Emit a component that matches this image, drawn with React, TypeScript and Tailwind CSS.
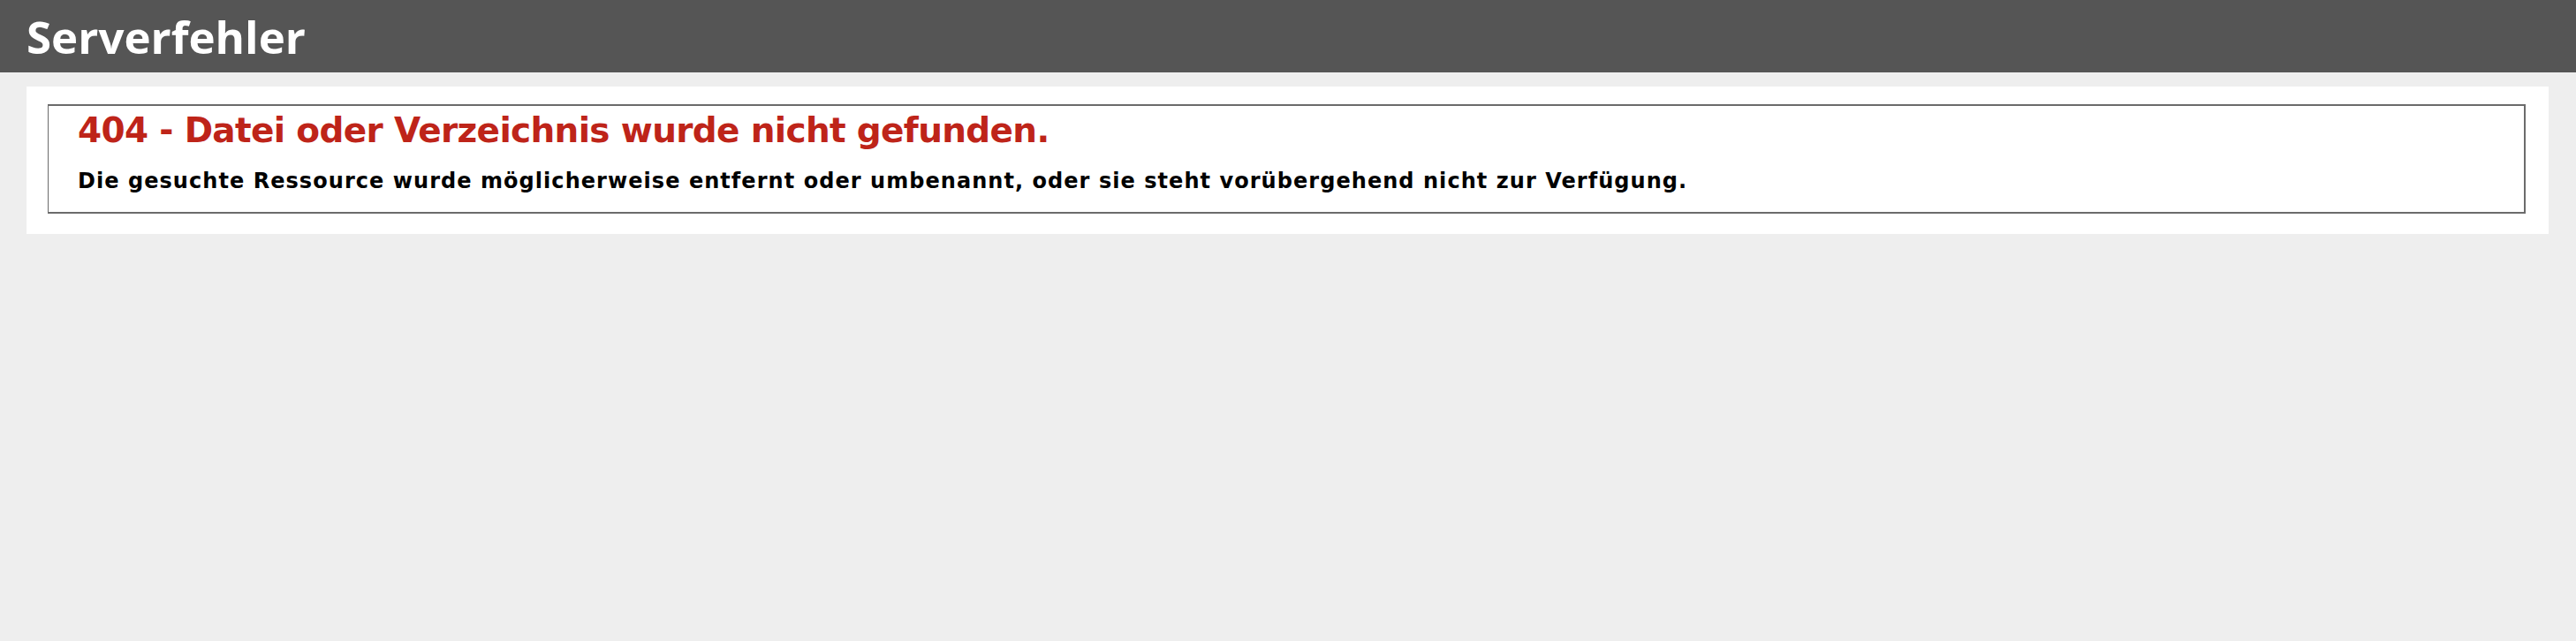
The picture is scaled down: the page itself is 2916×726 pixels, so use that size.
export default function App() {
  return (
    <div className="min-h-screen bg-[#eeeeee]">
      <header className="flex h-[82px] items-center bg-[#555555] pl-[30px]">
        <h1 className="font-['Open_Sans',sans-serif] text-[51px] font-bold leading-none text-white">
          Serverfehler
        </h1>
      </header>

      <div className="ml-[30px] mr-[31px] mt-[16px] bg-white pb-[23px] pl-[24px] pr-[26px] pt-[20px]">
        <div className="border-b-2 border-l border-r-2 border-t-2 border-[#6b6b6b] pb-[21px] pl-[33px] pt-[5px] font-['DejaVu_Sans',Verdana,sans-serif] font-bold">
          <h2 className="text-[39px] leading-[46px] tracking-[-0.68px] text-[#be2419]">
            404 - Datei oder Verzeichnis wurde nicht gefunden.
          </h2>
          <h3 className="mt-[20px] text-[24px] leading-[28px] tracking-[1.05px] text-black">
            Die gesuchte Ressource wurde möglicherweise entfernt oder umbenannt, oder sie steht vorübergehend nicht zur Verfügung.
          </h3>
        </div>
      </div>
    </div>
  );
}
